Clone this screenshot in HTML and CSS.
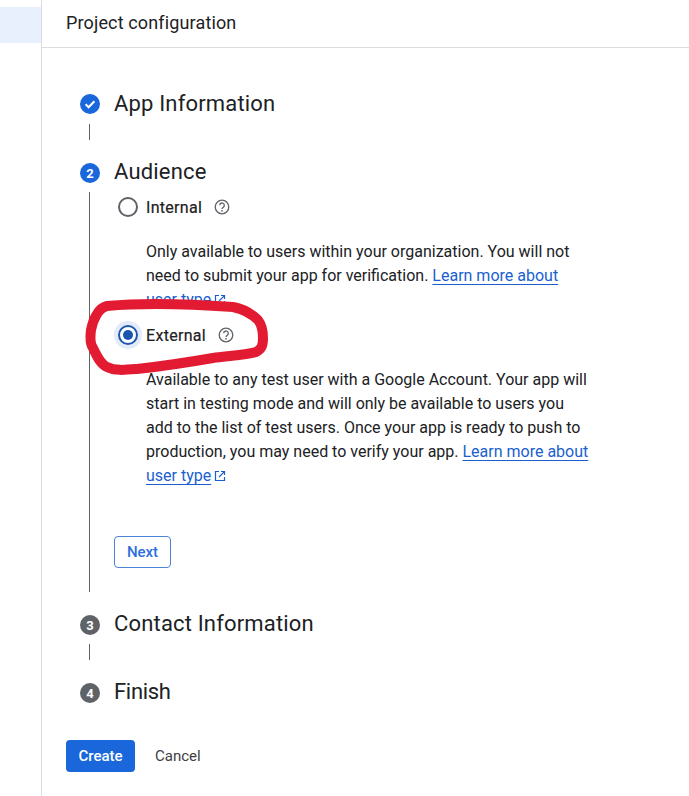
FILE: index.html
```html
<!DOCTYPE html>
<html lang="en">
<head>
<meta charset="utf-8">
<title>Project configuration</title>
<link rel="stylesheet" href="styles.css">
</head>
<body>
<div class="app">
  <aside class="sidebar"><div class="nav-active"></div></aside>
  <main class="main">
    <header class="topbar"><h1 class="page-title">Project configuration</h1></header>
    <div class="stepper">
      <section class="step">
        <div class="step-head">
          <span class="badge badge-blue"><svg viewBox="0 0 20 20" width="20" height="20"><path d="M5.6 10.3l3 3 5.8-6" fill="none" stroke="#fff" stroke-width="2"/></svg></span>
          <h2 class="step-title">App Information</h2>
        </div>
        <div class="rail rail-short"></div>
      </section>
      <section class="step">
        <div class="step-head">
          <span class="badge badge-blue badge-low">2</span>
          <h2 class="step-title">Audience</h2>
        </div>
        <div class="rail rail-body">
          <div class="option">
            <span class="radio"></span>
            <span class="option-label">Internal</span>
            <svg class="help" viewBox="0 0 16 16" width="16" height="16"><circle cx="8" cy="8" r="6.8" fill="none" stroke="#5f6368" stroke-width="1.3"/><path d="M5.7 6.3a2.3 2.3 0 1 1 3.6 1.9c-.9.6-1.3 1-1.3 1.8" fill="none" stroke="#5f6368" stroke-width="1.3"/><circle cx="8" cy="11.8" r=".9" fill="#5f6368"/></svg>
          </div>
          <p class="desc desc-first">Only available to users within your organization. You will not need to submit your app for verification. <a class="link" href="#">Learn more about user type</a><svg class="ext" viewBox="0 0 12 12" width="12" height="12"><path d="M5 1.5H1.5v9h9V7M7 1.5h3.5V5M10.2 1.8L5 7" fill="none" stroke="#1a5fd0" stroke-width="1.2"/></svg></p>
          <div class="option">
            <span class="radio radio-on"></span>
            <span class="option-label">External</span>
            <svg class="help" viewBox="0 0 16 16" width="16" height="16"><circle cx="8" cy="8" r="6.8" fill="none" stroke="#5f6368" stroke-width="1.3"/><path d="M5.7 6.3a2.3 2.3 0 1 1 3.6 1.9c-.9.6-1.3 1-1.3 1.8" fill="none" stroke="#5f6368" stroke-width="1.3"/><circle cx="8" cy="11.8" r=".9" fill="#5f6368"/></svg>
          </div>
          <p class="desc desc-second">Available to any test user with a Google Account. Your app will start in testing mode and will only be available to users you add to the list of test users. Once your app is ready to push to production, you may need to verify your app. <a class="link" href="#">Learn more about user type</a><svg class="ext" viewBox="0 0 12 12" width="12" height="12"><path d="M5 1.5H1.5v9h9V7M7 1.5h3.5V5M10.2 1.8L5 7" fill="none" stroke="#1a5fd0" stroke-width="1.2"/></svg></p>
          <button class="btn btn-outline" type="button">Next</button>
        </div>
      </section>
      <section class="step">
        <div class="step-head">
          <span class="badge badge-grey badge-low">3</span>
          <h2 class="step-title">Contact Information</h2>
        </div>
        <div class="rail rail-short"></div>
      </section>
      <section class="step">
        <div class="step-head">
          <span class="badge badge-grey badge-low">4</span>
          <h2 class="step-title step-title-tight">Finish</h2>
        </div>
      </section>
    </div>
    <footer class="actions">
      <button class="btn btn-primary" type="button">Create</button>
      <button class="btn btn-text" type="button">Cancel</button>
    </footer>
  </main>
</div>
<svg class="scribble" viewBox="0 0 689 796" width="689" height="796"><path d="M233 307C190 304 140 303 107 306C98 308 93 320 91 330C90 338 90 344 93 348C97 356 100 364 107 367C115 371 125 370 137 369C165 366 190 362 213 358C228 356 245 355 256 352C262 349 263 345 263 338C263 330 262 325 258 320C251 313 243 309 233 307" fill="none" stroke="#e21b33" stroke-width="10" stroke-linecap="round" stroke-linejoin="round"/></svg>
</body>
</html>
```
FILE: styles.css
```css
* { box-sizing: border-box; }
html, body { margin: 0; padding: 0; background: #fff; }
body { font-family: Roboto, "Liberation Sans", sans-serif; color: #202124; width: 689px; height: 796px; overflow: hidden; position: relative; }
.app { display: flex; height: 796px; }
.sidebar { width: 42px; flex: none; border-right: 1px solid #dadce0; padding-top: 7px; }
.nav-active { height: 36px; background: #e8f0fe; }
.main { flex: 1; min-width: 0; }
.topbar { height: 48px; border-bottom: 1px solid #dadce0; padding-left: 24px; display: flex; align-items: center; }
.page-title { margin: 0 0 1px; font-size: 18px; font-weight: 400; line-height: 24px; letter-spacing: .14px; }
.stepper { padding-top: 36px; }
.step { margin-bottom: 12px; }
.step:last-child { margin-bottom: 0; }
.step-head { height: 40px; display: flex; align-items: center; padding-left: 38px; gap: 14px; }
.badge { width: 20px; height: 20px; border-radius: 50%; color: #fff; font-size: 13px; font-weight: 700; display: flex; align-items: center; justify-content: center; flex: none; }
.badge-low { margin-top: 2px; }
.badge-blue { background: #1a67dc; }
.badge-grey { background: #5f6368; }
.step-title { margin: 0; font-size: 22px; font-weight: 400; line-height: 28px; color: #202124; letter-spacing: .17px; }
.step-title-tight { letter-spacing: -.3px; }
.rail { margin-left: 47px; border-left: 1px solid #5f6368; }
.rail-short { height: 16px; }
.rail-body { height: 400px; padding-left: 28px; }
.option { height: 30px; display: flex; align-items: center; }
.radio { width: 20px; height: 20px; border-radius: 50%; border: 2px solid #5f6368; flex: none; position: relative; }
.radio-on { border-color: #1a56b0; box-shadow: 0 0 0 4px #e3ebf8; }
.radio-on::after { content: ""; position: absolute; left: 3px; top: 3px; width: 10px; height: 10px; border-radius: 50%; background: #1a56b0; }
.option-label { font-size: 16px; font-weight: 400; margin-left: 8px; line-height: 20px; padding-top: 1px; letter-spacing: .3px; -webkit-text-stroke: .2px #202124; }
.help { margin-left: 12px; flex: none; }
.desc { margin: 0 0 0 28px; width: 445px; font-size: 16px; line-height: 24px; color: #202124; }
.desc-first { margin-top: 18px; margin-bottom: 8px; }
.desc-second { margin-top: 18px; }
.link { color: #1a5fd0; text-decoration: underline; text-underline-offset: 3px; }
.ext { margin-left: 3px; vertical-align: -1px; }
.btn { font-family: inherit; font-size: 15px; font-weight: 500; height: 32px; border-radius: 4px; cursor: pointer; padding: 0; }
.btn-outline { display: block; margin: 48px 0 0 -4px; width: 57px; background: #fff; color: #2d6fdc; border: 1px solid #4d83d6; }
.actions { display: flex; align-items: center; margin-top: 28px; padding-left: 24px; gap: 20px; }
.btn-primary { width: 69px; background: #1a67dc; color: #fff; border: 0; }
.btn-text { background: none; border: 0; color: #3c4043; font-weight: 400; }
.scribble { position: absolute; left: 0; top: 0; pointer-events: none; }
```
